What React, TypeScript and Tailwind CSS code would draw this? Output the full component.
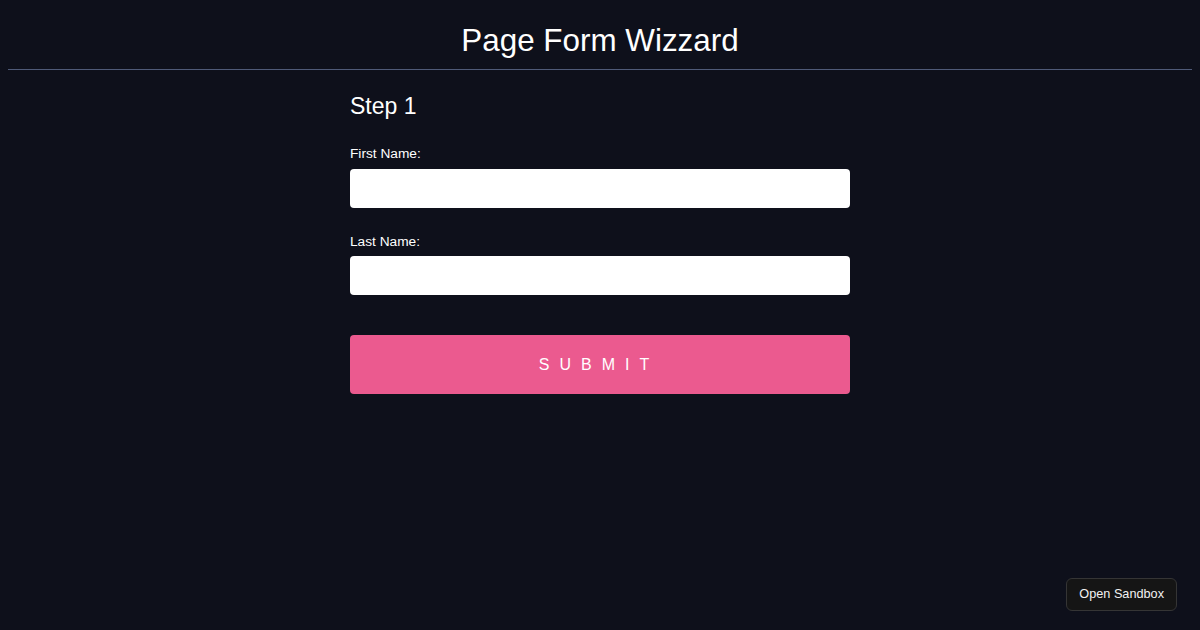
export default function App() {
  return (
    <div className="min-h-[630px] bg-[#0e101b] text-white font-['Liberation_Sans',Arial,sans-serif]">
      <header className="pt-[22px] pb-[10px] text-center">
        <h1 className="text-[31.4px] leading-[37px] font-normal">Page Form Wizzard</h1>
      </header>
      <hr className="mx-2 border-0 border-t border-[#4f5a78]" />

      <form className="mx-auto w-[500px] pt-[23px]" onSubmit={(e) => e.preventDefault()}>
        <h2 className="text-[23px] leading-[26px] font-normal">Step 1</h2>

        <label className="mt-[27px] mb-[7px] block text-[13.7px] leading-[16px]" htmlFor="first">
          First Name:
        </label>
        <input id="first" className="block h-[39px] w-full rounded-[4px] bg-white px-3 text-black outline-none" />

        <label className="mt-[26px] mb-[6px] block text-[13.7px] leading-[16px]" htmlFor="last">
          Last Name:
        </label>
        <input id="last" className="block h-[39px] w-full rounded-[4px] bg-white px-3 text-black outline-none" />

        <button
          type="submit"
          className="mt-[40px] flex h-[59px] w-full items-center justify-center rounded-[4px] bg-[#eb5a8f] text-[16px] leading-[18px] tracking-[10px] text-white"
        >
          <span className="mr-[2px]">SUBMIT</span>
        </button>
      </form>

      <button className="fixed right-[23px] bottom-[19px] h-[33px] rounded-[6px] border border-[#353535] bg-[#151515] px-[12px] text-[12.7px] text-[#f2f2f2]">
        Open Sandbox
      </button>
    </div>
  );
}
